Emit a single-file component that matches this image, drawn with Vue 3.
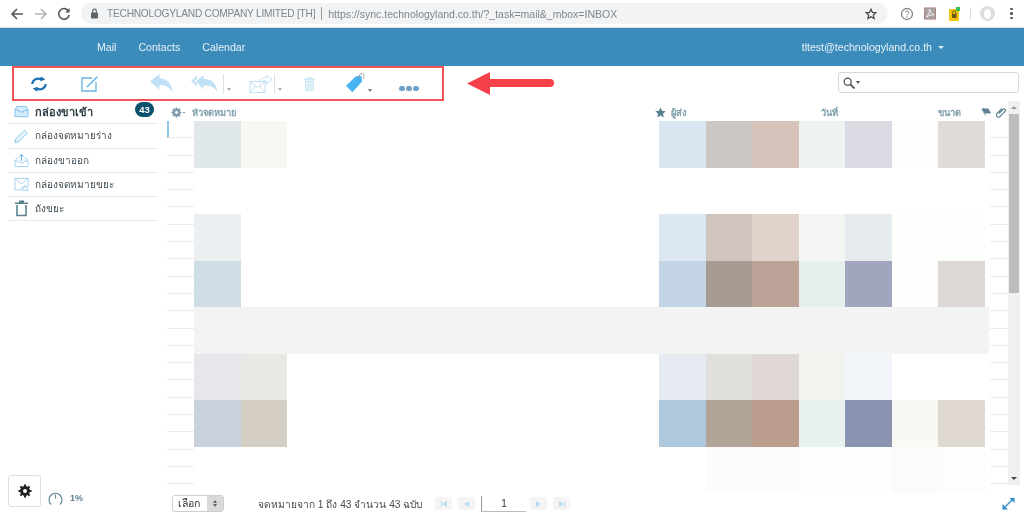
<script setup>
const sideItems = [
  { label: 'กล่องขาเข้า', icon: 'inbox', active: true, badge: 43 },
  { label: 'กล่องจดหมายร่าง', icon: 'pencil' },
  { label: 'กล่องขาออก', icon: 'outbox' },
  { label: 'กล่องจดหมายขยะ', icon: 'junk' },
  { label: 'ถังขยะ', icon: 'trash' }
]
const mosaicRows = [
  { left: ['#e0e8ec', '#f8f7f4'], right: ['#d9e6f1', '#ccc7c2', '#d6c3ba', '#eef3f2', '#d9dae2', '#fdfdfc', '#e1dcd9'] },
  { left: ['#fff', '#fff'], right: ['#fff', '#fff', '#fff', '#fff', '#fff', '#fff', '#fff'] },
  { left: ['#ebeff2', '#fff'], right: ['#dce7f2', '#cfc5be', '#e0d3cc', '#f4f6f4', '#e6ebee', '#fefefd', '#fefefd'] },
  { left: ['#cfdde4', '#fff'], right: ['#c3d5e5', '#a59b90', '#bda397', '#e7efee', '#a1a5bd', '#fdfdfb', '#ddd8d6'] },
  { full: true },
  { left: ['#e6e7ea', '#e9e8e5'], right: ['#e6ebf1', '#e0dfdc', '#e0d8d4', '#f1f3ef', '#f2f6fa', '#fff', '#fff'] },
  { left: ['#c9d1dd', '#d5cec5'], right: ['#aec8de', '#b0a596', '#bc9c8c', '#e8f0f0', '#8a93af', '#f9f8f3', '#dfd9d1'] },
  { left: ['#fff', '#fff'], right: ['#fff', '#fcfcfc', '#fcfcfc', '#fdfefe', '#fefefe', '#fbfbfb', '#fdfdfd'] }
]
const ticks = Array.from({ length: 21 }, (_, i) => i)
</script>

<template>
  <div class="page">
    <header class="chrome">
      <svg class="nav" width="14" height="14" viewBox="0 0 14 14"><path d="M13 7H2M7 2 2 7l5 5" fill="none" stroke="#555" stroke-width="1.6"/></svg>
      <svg class="nav nav-fwd" width="14" height="14" viewBox="0 0 14 14"><path d="M1 7h11M7 2l5 5-5 5" fill="none" stroke="#b4b4b4" stroke-width="1.6"/></svg>
      <svg class="nav nav-reload" width="14" height="14" viewBox="0 0 14 14"><path d="M11.6 4.2A5.3 5.3 0 1 0 12.2 8" fill="none" stroke="#555" stroke-width="1.6"/><path d="M12.6 1v4.4H8.2z" fill="#555"/></svg>
      <div class="omnibox">
        <svg width="9" height="11" viewBox="0 0 9 11"><rect x="1" y="4.5" width="7" height="6" rx="1" fill="#5f6368"/><path d="M2.7 5V3a1.8 1.8 0 0 1 3.600 0v2" fill="none" stroke="#5f6368" stroke-width="1.2"/></svg>
        <span class="org">TECHNOLOGYLAND COMPANY LIMITED [TH]</span>
        <span class="sep"></span>
        <span class="url">https://sync.technologyland.co.th/?_task=mail&amp;_mbox=INBOX</span>
        <svg class="star" width="12" height="12" viewBox="0 0 24 24"><path d="m12 2.5 2.9 6.3 6.9.8-5.1 4.7 1.4 6.8L12 17.6l-6.1 3.5 1.400-6.8-5.100-4.700 6.900-.8z" fill="none" stroke="#444" stroke-width="2.4"/></svg>
      </div>
      <div class="ext">
        <svg width="14" height="14" viewBox="0 0 14 14"><circle cx="7" cy="7" r="5.500" fill="none" stroke="#888" stroke-width="1.300"/><path d="M5.400 5.600a1.700 1.700 0 1 1 2.400 1.600c-.6.300-.8.600-.8 1.300" fill="none" stroke="#888"/><circle cx="7" cy="10" r=".7" fill="#888"/></svg>
        <svg width="12" height="13" viewBox="0 0 13 13"><rect width="13" height="13" fill="#b3726f"/><rect x=".7" y=".7" width="11.600" height="11.600" fill="#a7a3a2"/><path d="M2.500 10.500C5 8 6.500 4 6 2c1 3 2.500 5 5 6-3-.4-5 .2-8.500 2.500z" fill="none" stroke="#fff" stroke-width=".9"/></svg>
        <svg width="11" height="14" viewBox="0 0 11 14"><rect y="2" width="10" height="12" rx="1" fill="#f1c40f"/><rect x="3" y="7" width="4.500" height="4" fill="#6b5a12"/><path d="M3.700 7V5.500a1.600 1.600 0 0 1 3.200 0V7" fill="none" stroke="#6b5a12"/><rect x="7" width="4" height="4" fill="#36c24a"/></svg>
        <span class="ext-div"></span>
        <span class="avatar"><span class="avatar-head"></span></span>
        <span class="dots3"><i></i><i></i><i></i></span>
      </div>
    </header>

    <nav class="topbar">
      <a>Mail</a><a>Contacts</a><a>Calendar</a>
      <span class="user">tltest@technologyland.co.th<b class="caret"></b></span>
    </nav>

    <section class="toolbar">
      <div class="redbox">
        <svg class="t-refresh" width="18" height="18" viewBox="0 0 20 20"><path d="M2.500 10C3 5 8 2.500 13 5" fill="none" stroke="#1c6fb0" stroke-width="2.400"/><path d="m12 1.500 5 3.500-5.500 2z" fill="#1c6fb0"/><path d="M17.500 10c-.5 5-5.500 7.500-10.500 5" fill="none" stroke="#1c6fb0" stroke-width="2.400"/><path d="M8 18.500 3 15l5.500-2z" fill="#1c6fb0"/></svg>
        <svg class="t-compose" width="18" height="17" viewBox="0 0 18 17"><path d="M11 3H1v13h14V7" fill="none" stroke="#63b4e4" stroke-width="1.300"/><path d="M6 11 16 1l1 1L7 12l-2 .5z" fill="#63b4e4"/></svg>
        <svg class="t-reply" width="23" height="19" viewBox="0 0 23 19"><path d="M0 7.500 9.500 0v4.500C17 4.500 22 9 22.500 18.500 19.500 13 16 11 9.500 11v4.500z" fill="#bfe0f5"/></svg>
        <svg class="t-replyall" width="27" height="19" viewBox="0 0 27 19"><path d="M0 7 6 1.500v3.500L3 7l3 2v3.500z" fill="#bfe0f5"/><path d="M5 7.500 12.500 1v4c8 0 13 4 14 13.500-3-5.500-7-7-14-7v4z" fill="#bfe0f5"/></svg>
        <span class="t-div"></span><b class="t-caret"></b>
        <svg class="t-forward" width="24" height="18" viewBox="0 0 24 18"><path d="M1 6.500h15v11H1zM1 6.500l7.500 6 7.500-6M1 17.500l5.500-6.500M16 17.500l-5.500-6.500" fill="none" stroke="#bfe0f5" stroke-width="1"/><path d="M10 7c1-3 4-4.500 7.500-4.500V.5L23 4.500l-5.500 4.500V6c-3 0-5 .3-7.500 1z" fill="#fff" stroke="#bfe0f5"/></svg>
        <span class="t-div t-div2"></span><b class="t-caret"></b>
        <svg class="t-trash" width="11" height="14" viewBox="0 0 11 14"><path d="M0 1.500h11v1.500H0zM3.500 0h4v1.500h-4zM1 3.500h9V14H1z" fill="#cfe8f7"/><path d="M3 5v8M5.500 5v8M8 5v8" stroke="#fff" stroke-width=".8"/></svg>
        <svg class="t-tag" width="22" height="21" viewBox="0 0 22 23"><path d="M0 14 11 3.500l6-.5.500 6.500L7 21z" fill="#48b4f2"/><path d="M14 6c0-3 1-5.500 3.500-5.500s3 3.500 1 6" fill="none" stroke="#9a9a9a"/></svg>
        <b class="t-caret t-caret3"></b>
        <span class="t-dots"><i></i><i></i><i></i></span>
      </div>
      <svg class="arrow" width="87" height="23" viewBox="0 0 87 23"><path d="M0 11.500 23 0v7h60a4 4 0 0 1 0 8H23v8z" fill="#f6414b"/></svg>
      <div class="search">
        <svg width="12" height="12" viewBox="0 0 12 12"><circle cx="4.700" cy="4.700" r="3.500" fill="none" stroke="#555" stroke-width="1.300"/><path d="m7.500 7.500 4 4" stroke="#555" stroke-width="1.800"/></svg>
        <b class="s-caret"></b>
      </div>
    </section>

    <main class="body">
      <aside class="side">
        <ul class="folders">
          <li v-for="f in sideItems" :key="f.label" class="folder" :class="{ active: f.active }">
            <svg v-if="f.icon === 'inbox'" width="16" height="14" viewBox="0 0 16 14"><path d="M1 5 3 1h10l2 4v7H1z" fill="#d5ebf9" stroke="#7cc0ea"/><path d="M1 5h4l1 2h4l1-2h4" fill="none" stroke="#7cc0ea"/></svg>
            <svg v-else-if="f.icon === 'pencil'" width="16" height="16" viewBox="0 0 16 16"><path d="M1 15l1-4L11 2l3 3-9 9z" fill="#e8f4fc" stroke="#7cc0ea"/></svg>
            <svg v-else-if="f.icon === 'outbox'" width="16" height="15" viewBox="0 0 16 15"><path d="M1 8l2-3h2M11 5h2l2 3v6H1V8h4l1 2h4l1-2h4" fill="none" stroke="#a4d3f0"/><path d="M8 1v7M5.500 3.500 8 1l2.500 2.500" fill="none" stroke="#5da8d8"/></svg>
            <svg v-else-if="f.icon === 'junk'" width="16" height="15" viewBox="0 0 16 15"><path d="M1 1h14v9H9l-1 3H1zM1 1l7 6 7-6" fill="none" stroke="#a4d3f0"/><path d="M12 8l3 6H9z" fill="#fff" stroke="#a4d3f0"/></svg>
            <svg v-else width="13" height="17" viewBox="0 0 13 17"><path d="M0 2.500h13v1.500H0zM4 .500h5v2H4z" fill="#5c8292"/><path d="M2 5v10.500h9V5" fill="none" stroke="#5c8292" stroke-width="1.600"/></svg>
            <span>{{ f.label }}</span>
            <em v-if="f.badge" class="badge">{{ f.badge }}</em>
          </li>
        </ul>
        <div class="side-foot">
          <button class="gear-btn">
            <svg width="14" height="14" viewBox="0 0 14 14"><circle cx="7" cy="7" r="3.600" fill="none" stroke="#222" stroke-width="2.800"/><path d="M7 .500v13M.500 7h13M2.400 2.400l9.200 9.200M11.600 2.400l-9.200 9.200" stroke="#222" stroke-width="2"/><circle cx="7" cy="7" r="2" fill="#fff"/></svg>
          </button>
          <svg class="gauge" width="15" height="15" viewBox="0 0 15 15"><path d="M3 13.500a6.500 6.500 0 1 1 9 0" fill="none" stroke="#5c8292" stroke-width="1.100"/><path d="M7.500 3.500v4" stroke="#5c8292"/></svg>
          <span class="quota">1%</span>
        </div>
      </aside>

      <section class="list">
        <div class="list-top">
          <div class="list-main">
            <div class="list-head">
              <svg class="h-gear" width="11" height="11" viewBox="0 0 14 14"><circle cx="7" cy="7" r="3.600" fill="none" stroke="#7d9dab" stroke-width="2.800"/><path d="M7 .500v13M.500 7h13M2.400 2.400l9.200 9.200M11.600 2.400l-9.200 9.200" stroke="#7d9dab" stroke-width="2"/><circle cx="7" cy="7" r="1.800" fill="#fff"/></svg>
              <b class="h-dot"></b>
              <span class="h-subject">หัวจดหมาย</span>
              <svg class="h-star" width="11" height="11" viewBox="0 0 24 24"><path d="m12 1 3.400 7.400 8 .9-5.900 5.500 1.600 8L12 18.800l-7.100 4 1.600-8L.6 9.300l8-.9z" fill="#5c8292"/></svg>
              <span class="h-from">ผู้ส่ง</span>
              <span class="h-date">วันที่</span>
              <span class="h-size">ขนาด</span>
              <svg class="h-flag" width="10" height="10" viewBox="0 0 10 10"><path d="M1 2c2-1.500 4 1 6-.5L9.500 6C8 7 6 5 4 6.500zM1 2l3.500 7" fill="#5c8292" stroke="#5c8292" stroke-width=".6"/></svg>
              <svg class="h-clip" width="11" height="11" viewBox="0 0 11 11"><path d="M3 6.500 7.500 2a1.500 1.500 0 0 1 2 2L4 9.500a2 2 0 0 1-3-3L6 1.500" fill="none" stroke="#5c8292" stroke-width="1.100"/></svg>
            </div>
            <div class="grid-area">
              <div class="ticks ticks-l"><i v-for="t in ticks" :key="t"></i></div>
              <div class="mosaic">
                <div v-for="(r, i) in mosaicRows" :key="i" class="mrow" :class="{ full: r.full }">
                  <template v-if="!r.full">
                    <i v-for="(c, j) in r.left" :key="'l' + j" class="cell" :style="{ background: c }"></i>
                    <span class="gap"></span>
                    <i v-for="(c, j) in r.right" :key="'r' + j" class="cell" :style="{ background: c }"></i>
                  </template>
                </div>
              </div>
              <div class="ticks ticks-r"><i v-for="t in ticks" :key="t"></i></div>
            </div>
          </div>
          <div class="scrollbar">
            <b class="sb-up"></b>
            <div class="sb-thumb"></div>
            <b class="sb-down"></b>
          </div>
        </div>
        <div class="pager">
          <span class="select">เลือก<span class="sel-arrows"><b class="up"></b><b class="down"></b></span></span>
          <span class="count">จดหมายจาก 1 ถึง 43 จำนวน 43 ฉบับ</span>
          <span class="pbtn"><svg width="6" height="6" viewBox="0 0 6 6"><path d="M0 0h1v6H0zM6 0v6L1 3z" fill="#b9dcf2"/></svg></span>
          <span class="pbtn"><svg width="5" height="6" viewBox="0 0 5 6"><path d="M5 0v6L0 3z" fill="#b9dcf2"/></svg></span>
          <span class="pnum">1</span>
          <span class="pbtn"><svg width="5" height="6" viewBox="0 0 5 6"><path d="M0 0v6l5-3z" fill="#b9dcf2"/></svg></span>
          <span class="pbtn"><svg width="6" height="6" viewBox="0 0 6 6"><path d="M5 0h1v6H5zM0 0v6l5-3z" fill="#b9dcf2"/></svg></span>
          <svg class="expand" width="13" height="13" viewBox="0 0 13 13"><path d="M1 12 12 1" stroke="#2f8fd0" stroke-width="1.200"/><path d="M7.500 1H12.500V6zM.500 7V12.500H6z" fill="#2f8fd0"/></svg>
        </div>
      </section>
    </main>
  </div>
</template>

<style>
html, body { margin: 0; background: #fff; }
</style>

<style scoped>
.page { width: 1024px; height: 521px; overflow: hidden; display: flex; flex-direction: column; font-family: "Liberation Sans", Arial, "Noto Sans", sans-serif; background: #fff; filter: blur(0.35px); }

.chrome { height: 27px; flex: none; display: flex; align-items: center; background: #fff; border-bottom: 1px solid #d8dadc; }
.nav { flex: none; margin-left: 10px; }
.nav-fwd { margin-left: 10px; }
.nav-reload { margin-left: 9px; }
.omnibox { margin-left: 10px; width: 807px; height: 21px; flex: none; box-sizing: border-box; background: #f1f3f4; border-radius: 11px; display: flex; align-items: center; padding: 0 11px 0 9px; white-space: nowrap; }
.org { margin-left: 8px; color: #80868b; font-size: 10.200px; letter-spacing: -0.25px; }
.sep { width: 1px; height: 13px; background: #9a9a9a; margin: 0 6px; }
.url { color: #80868b; font-size: 10.500px; }
.star { margin-left: auto; }
.ext { display: flex; align-items: center; margin-left: 12px; }
.ext > svg:nth-child(2) { margin-left: 10px; }
.ext > svg:nth-child(3) { margin-left: 13px; }
.ext-div { width: 1px; height: 12px; background: #ddd; margin-left: 10px; }
.avatar { width: 15px; height: 15px; border-radius: 50%; margin-left: 9px; background: #ddd; display: flex; align-items: center; justify-content: center; }
.avatar-head { width: 7px; height: 10px; border-radius: 50%; background: #fff; }
.dots3 { display: flex; flex-direction: column; gap: 2px; margin-left: 15px; }
.dots3 i { width: 2.500px; height: 2.500px; background: #555; border-radius: 50%; }

.topbar { height: 38px; flex: none; background: #3c8cbb; color: #e6f1f7; display: flex; align-items: center; font-size: 10.600px; box-sizing: border-box; padding-left: 97px; }
.topbar a:nth-child(2) { margin-left: 22px; }
.topbar a:nth-child(3) { margin-left: 22px; }
.user { margin-left: auto; margin-right: 80px; font-size: 10.600px; display: flex; align-items: center; }
.caret { margin-left: 6px; border: 3px solid transparent; border-top: 3px solid #e6f1f7; border-bottom: 0; }

.toolbar { height: 34px; flex: none; display: flex; align-items: flex-start; }
.redbox { margin: 0 0 0 12px; width: 432px; height: 35px; flex: none; box-sizing: border-box; border: 2px solid #f2535a; display: flex; align-items: center; }
.t-refresh { margin-left: 16px; }
.t-compose { margin-left: 33px; }
.t-reply { margin-left: 51px; }
.t-replyall { margin-left: 18px; }
.t-div { width: 1px; height: 20px; background: #dbe3e8; margin-left: 5px; }
.t-div2 { margin-left: 1px; }
.t-caret { margin: 12px 0 0 3px; border: 2.500px solid transparent; border-top: 3px solid #a9b0b5; border-bottom: 0; }
.t-forward { margin-left: 18px; }
.t-trash { margin-left: 22px; }
.t-tag { margin-left: 30px; }
.t-caret3 { margin-left: 1px; border-top-color: #777; margin-top: 14px; }
.t-dots { display: flex; gap: 1.500px; margin-left: 27px; margin-top: 10px; }
.t-dots i { width: 5.500px; height: 5.500px; border-radius: 50%; background: #6ea0c8; }
.arrow { margin: 6px 0 0 23px; flex: none; }
.search { margin: 6px 5px 0 auto; width: 181px; height: 21px; box-sizing: border-box; border: 1px solid #d8d8d8; border-radius: 3px; display: flex; align-items: center; padding-left: 4px; }
.s-caret { margin-left: 1px; border: 2.500px solid transparent; border-top: 3px solid #555; border-bottom: 0; }

.body { flex: 1; min-height: 0; display: flex; }
.side { width: 167px; flex: none; display: flex; flex-direction: column; }
.folders { list-style: none; margin: 0 0 0 8px; padding: 0; width: 150px; }
.folder { height: 24.300px; display: flex; align-items: center; border-bottom: 1.500px solid #ebebeb; box-sizing: border-box; padding-left: 6px; font-size: 10px; color: #3d4a52; position: relative; }
.folder svg { flex: none; width: 15px; }
.folder span { margin-left: 6px; }
.folder.active { font-weight: bold; color: #2b3a42; }
.folder.active span { font-size: 11px; }
.badge { position: absolute; left: 127px; top: 2px; width: 19px; height: 15px; line-height: 15px; text-align: center; border-radius: 8px; background: #08506b; color: #fff; font-size: 9.500px; font-style: normal; font-weight: bold; }
.side-foot { margin-top: auto; display: flex; align-items: center; padding: 0 0 14px 8px; }
.gear-btn { width: 33px; height: 32px; box-sizing: border-box; padding: 0; background: #fff; border: 1px solid #dedede; border-radius: 3px; display: flex; align-items: center; justify-content: center; }
.gauge { margin: 14px 0 0 7px; }
.quota { margin: 14px 0 0 7px; font-size: 9px; font-weight: bold; color: #5c8292; }

.list { flex: 1; min-width: 0; display: flex; flex-direction: column; }
.list-top { height: 385px; flex: none; display: flex; }
.list-main { width: 841px; flex: none; display: flex; flex-direction: column; }
.list-head { height: 21px; flex: none; box-sizing: border-box; padding-top: 3px; display: flex; align-items: center; font-size: 9.300px; font-weight: bold; color: #7d9dab; }
.h-gear { margin-left: 4px; }
.h-dot { margin: 0 0 0 1px; width: 2px; height: 1px; background: #7d9dab; }
.h-subject { margin-left: 7px; width: 462px; }
.h-star { margin-left: 1px; }
.h-from { margin-left: 5px; width: 150px; }
.h-date { width: 117px; }
.h-size { width: 43px; }
.h-clip { margin-left: 5px; }
.grid-area { flex: 1; min-height: 0; display: flex; }
.ticks { flex: none; display: flex; flex-direction: column; }
.ticks i { height: 17.300px; flex: none; box-sizing: border-box; border-bottom: 1px solid #ebebeb; }
.ticks-l { width: 27px; }
.ticks-l i:first-child { border-left: 2px solid #8cc8e6; }
.ticks-r { width: 18px; margin-left: 1px; }
.mosaic { width: 795px; flex: none; }
.mrow { height: 46.500px; display: flex; }
.mrow.full { background: #f3f3f3; }
.cell { width: 46.500px; height: 100%; flex: none; }
.gap { width: 372px; flex: none; }
.scrollbar { width: 12px; margin-top: 1px; background: #f0f0f0; display: flex; flex-direction: column; align-items: center; }
.sb-up { margin-top: 5px; border: 3px solid transparent; border-bottom: 3px solid #999; border-top: 0; }
.sb-thumb { width: 10px; height: 179px; margin-top: 5px; background: #bdbdbd; }
.sb-down { margin-top: auto; margin-bottom: 5px; border: 3px solid transparent; border-top: 3px solid #444; border-bottom: 0; }

.pager { height: 17px; margin-top: 10px; flex: none; display: flex; align-items: center; padding: 0 0 0 5px; font-size: 10.200px; color: #4a4a4a; }
.select { width: 52px; height: 17px; box-sizing: border-box; border: 1px solid #cfcfcf; border-radius: 3px; display: flex; align-items: center; padding-left: 5px; color: #333; overflow: hidden; font-size: 10.500px; }
.sel-arrows { margin-left: auto; width: 16px; height: 100%; background: #d9d9d9; display: flex; flex-direction: column; align-items: center; justify-content: center; gap: 1.500px; }
.sel-arrows b { border: 2.500px solid transparent; }
.sel-arrows .up { border-bottom: 3px solid #666; border-top: 0; }
.sel-arrows .down { border-top: 3px solid #666; border-bottom: 0; }
.count { margin-left: 34px; white-space: nowrap; width: 177px; flex: none; }
.pbtn { width: 17px; height: 13px; margin-right: 6px; border-radius: 3px; background: #f4f4f4; display: flex; align-items: center; justify-content: center; flex: none; }
.pnum { width: 45px; height: 16px; line-height: 16px; margin: 0 4px 0 0; text-align: center; border-left: 1px solid #999; border-bottom: 1px solid #bbb; font-size: 10px; color: #333; box-sizing: border-box; flex: none; }
.expand { margin: 0 9px 0 auto; }
</style>
